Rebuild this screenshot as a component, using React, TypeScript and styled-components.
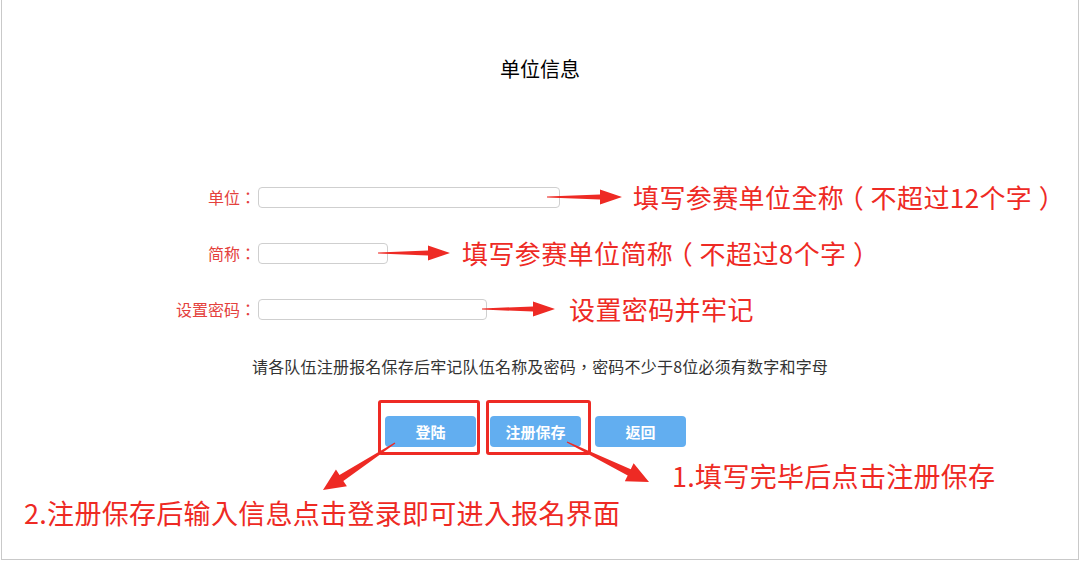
import styled, { createGlobalStyle } from 'styled-components';

const RED = '#ee2a24';
const CJK = "'Noto Sans CJK TC', 'Noto Sans CJK SC', sans-serif";

const GlobalStyle = createGlobalStyle`
  body {
    margin: 0;
    background: #fff;
    font-family: ${CJK};
  }
`;

// 화살표 모양: 꼬리는 가늘고 머리 쪽으로 넓어짐
const arrowPoints = (len: number, headLen: number, headW: number, shaftW: number) =>
  [
    `0,-0.6`,
    `${len - headLen},${-shaftW / 2}`,
    `${len - headLen},${-headW / 2}`,
    `${len},0`,
    `${len - headLen},${headW / 2}`,
    `${len - headLen},${shaftW / 2}`,
    `0,0.6`,
  ].join(' ');

interface IRow {
  label: string;
  inputWidth: number;
  overlap: number;
  arrowLen: number;
  noteGap: number;
  note: string;
  extra?: string;
}

const rows: IRow[] = [
  { label: '单位：', inputWidth: 302, overlap: 13, arrowLen: 75, noteGap: 11, note: '填写参赛单位全称', extra: '不超过12个字' },
  { label: '简称：', inputWidth: 130, overlap: 10, arrowLen: 72, noteGap: 12, note: '填写参赛单位简称', extra: '不超过8个字' },
  { label: '设置密码：', inputWidth: 229, overlap: 5, arrowLen: 73, noteGap: 14, note: '设置密码并牢记' },
];

const FlowArrow = ({ len, overlap }: { len: number; overlap: number }) => (
  <ArrowSvg width={len} height={16} $overlap={overlap}>
    <polygon points={arrowPoints(len, 22, 15, 5)} transform="translate(0,8)" fill={RED} />
  </ArrowSvg>
);

const DiagArrow = ({ x1, y1, x2, y2 }: { x1: number; y1: number; x2: number; y2: number }) => {
  const len = Math.hypot(x2 - x1, y2 - y1);
  const angle = (Math.atan2(y2 - y1, x2 - x1) * 180) / Math.PI;
  return (
    <polygon
      points={arrowPoints(len, 22, 20, 7)}
      transform={`translate(${x1},${y1}) rotate(${angle})`}
      fill={RED}
    />
  );
};

const App = () => {
  return (
    <>
      <GlobalStyle />
      <Page>
        <Title>单位信息</Title>

        <Form>
          {rows.map(row => (
            <Row key={row.label}>
              <Label>{row.label}</Label>
              <Field $width={row.inputWidth} />
              <FlowArrow len={row.arrowLen} overlap={row.overlap} />
              <Note $gap={row.noteGap}>
                {row.note}
                {row.extra && (
                  <>
                    <Paren>（</Paren>
                    {row.extra}
                    <Paren>）</Paren>
                  </>
                )}
              </Note>
            </Row>
          ))}
        </Form>

        <Hint>请各队伍注册报名保存后牢记队伍名称及密码，密码不少于8位必须有数字和字母</Hint>

        <ButtonRow>
          <Frame $pad="13px 1px 5px 4px">
            <Button>登陆</Button>
          </Frame>
          <Frame $pad="13px 7px 5px 1px">
            <Button>注册保存</Button>
          </Frame>
          <Button className="back">返回</Button>
        </ButtonRow>

        <Callout $left={670} $top={6}>1.填写完毕后点击注册保存</Callout>
        <Callout $left={22} $top={7}>2.注册保存后输入信息点击登录即可进入报名界面</Callout>

        <Overlay viewBox="2 0 1076 559">
          <DiagArrow x1={395} y1={443} x2={323} y2={490} />
          <DiagArrow x1={567} y1={442} x2={649} y2={482} />
        </Overlay>
      </Page>
    </>
  );
};

const Page = styled.div`
  position: relative;
  box-sizing: border-box;
  width: 1078px;
  height: 560px;
  margin-left: 1px;
  border: 1px solid #c9c9c9;
  border-top: none;
`;

const Title = styled.h1`
  margin: 0;
  padding-top: 58px;
  font-size: 20px;
  line-height: 22px;
  font-weight: 400;
  text-align: center;
  color: #000;
`;

const Form = styled.div`
  margin-top: 102px;
  display: flex;
  flex-direction: column;
  gap: 26px;
`;

const Row = styled.div`
  display: flex;
  align-items: center;
  height: 30px;
`;

const Label = styled.span`
  flex: none;
  width: 254px;
  text-align: right;
  font-size: 16px;
  color: #e4413d;
`;

const Field = styled.input<{ $width: number }>`
  flex: none;
  box-sizing: border-box;
  width: ${({ $width }) => $width}px;
  height: 21px;
  margin: 0 0 0 2px;
  padding: 0 4px;
  border: 1px solid #cfcfcf;
  border-radius: 4px;
  outline: none;
  background: #fff;
`;

const ArrowSvg = styled.svg<{ $overlap: number }>`
  display: block;
  flex: none;
  margin-left: ${({ $overlap }) => -$overlap}px;
  position: relative;
`;

const Note = styled.span<{ $gap: number }>`
  margin-left: ${({ $gap }) => $gap}px;
  font-size: 26px;
  letter-spacing: 0.4px;
  line-height: 30px;
  color: ${RED};
  white-space: nowrap;
`;

// 괄호를 반각 폭으로 줄이고 양쪽 여백으로 가운데 정렬
const Paren = styled.span`
  font-feature-settings: 'halt';
  margin: 0 0.25em;
`;

const Hint = styled.p`
  margin: 31px 0 0;
  text-align: center;
  font-size: 16px;
  letter-spacing: 0.2px;
  line-height: 22px;
  color: #333;
`;

const ButtonRow = styled.div`
  margin-top: 23px;
  padding-left: 376px;
  display: flex;
  align-items: flex-start;
  gap: 6px;

  .back {
    margin-top: 16px;
    margin-left: -2px;
  }
`;

const Frame = styled.div<{ $pad: string }>`
  display: flex;
  padding: ${({ $pad }) => $pad};
  border: 3px solid ${RED};
  border-radius: 3px;
`;

const Button = styled.button`
  width: 91px;
  height: 31px;
  padding: 0;
  border: none;
  border-radius: 4px;
  background: #62aef0;
  color: #fff;
  font-family: ${CJK};
  font-size: 15px;
  font-weight: 700;
  cursor: pointer;
`;

const Callout = styled.div<{ $left: number; $top: number }>`
  margin-top: ${({ $top }) => $top}px;
  padding-left: ${({ $left }) => $left}px;
  font-size: 27px;
  letter-spacing: 0.3px;
  line-height: 30px;
  color: ${RED};
  white-space: nowrap;
`;

const Overlay = styled.svg`
  position: absolute;
  top: 0;
  left: 0;
  width: 1076px;
  height: 559px;
  pointer-events: none;
`;

export default App;
